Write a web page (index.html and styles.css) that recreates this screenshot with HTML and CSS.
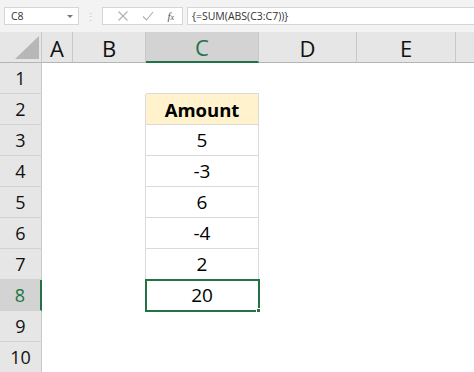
FILE: index.html
```html
<!DOCTYPE html>
<html>
<head>
<meta charset="utf-8">
<link rel="stylesheet" href="styles.css">
</head>
<body>
<div class="app">
  <div class="toolbar">
    <div class="namebox"><span class="name">C8</span><span class="caret"></span></div>
    <div class="grip">⋮</div>
    <div class="fbuttons">
      <svg class="ico" width="12" height="12" viewBox="0 0 12 12"><path d="M1.5 1.5 L10.5 10.5 M10.5 1.5 L1.5 10.5" stroke="#b0b0b0" stroke-width="1.1" fill="none"/></svg>
      <svg class="ico" width="12" height="12" viewBox="0 0 12 12"><path d="M1 6.5 L4.5 10 L11 2" stroke="#b0b0b0" stroke-width="1.1" fill="none"/></svg>
      <span class="fx">f<span class="fxx">x</span></span>
    </div>
    <div class="formula">{=SUM(ABS(C3:C7))}</div>
  </div>
  <div class="sheet">
    <div class="corner"><span class="tri"></span></div>
    <div class="colh">A</div>
    <div class="colh">B</div>
    <div class="colh sel">C</div>
    <div class="colh">D</div>
    <div class="colh">E</div>
    <div class="colh last"></div>

    <div class="rowh">1</div><div></div><div></div><div class="c c-top"></div><div></div><div></div><div></div>
    <div class="rowh">2</div><div></div><div class="b-edge"></div><div class="c head">Amount</div><div></div><div></div><div></div>
    <div class="rowh">3</div><div></div><div class="b-edge"></div><div class="c">5</div><div></div><div></div><div></div>
    <div class="rowh">4</div><div></div><div class="b-edge"></div><div class="c">-3</div><div></div><div></div><div></div>
    <div class="rowh">5</div><div></div><div class="b-edge"></div><div class="c">6</div><div></div><div></div><div></div>
    <div class="rowh">6</div><div></div><div class="b-edge"></div><div class="c">-4</div><div></div><div></div><div></div>
    <div class="rowh">7</div><div></div><div class="b-edge"></div><div class="c">2</div><div></div><div></div><div></div>
    <div class="rowh sel">8</div><div></div><div class="b-edge"></div><div class="c active">20<span class="handle"></span></div><div></div><div></div><div></div>
    <div class="rowh">9</div><div></div><div></div><div></div><div></div><div></div><div></div>
    <div class="rowh">10</div><div></div><div></div><div></div><div></div><div></div><div></div>
  </div>
</div>
</body>
</html>
```

FILE: styles.css
```css
* { box-sizing: border-box; }
html, body { margin: 0; padding: 0; background: #fff; }
body { width: 474px; height: 372px; overflow: hidden; font-family: "Open Sans", sans-serif; }

.toolbar {
  height: 32px;
  background: #f3f3f3;
  display: flex;
  align-items: center;
  padding: 0 0 0 4px;
}
.namebox {
  width: 75px; height: 18px;
  background: #fff;
  border: 1px solid #d6d6d6;
  display: flex; align-items: center; justify-content: space-between;
  padding: 0 5px 0 6px;
}
.name { font-size: 10.5px; color: #333; }
.caret { width: 0; height: 0; border-left: 3px solid transparent; border-right: 3px solid transparent; border-top: 3px solid #777; }
.grip { width: 23px; text-align: center; color: #c4c4c4; font-size: 11px; }
.fbuttons {
  width: 81px; height: 18px;
  background: #fff;
  border: 1px solid #d6d6d6;
  display: flex; align-items: center; justify-content: space-between;
  padding: 0 8px 0 14px;
}
.ico { display: block; }
.fx { font-family: "Liberation Serif", serif; font-style: italic; font-size: 11px; color: #555; line-height: 1; }
.fxx { font-size: 8px; }
.formula {
  flex: 1; height: 18px; margin-left: 4px;
  background: #fff;
  border: 1px solid #d6d6d6; border-right: none;
  font-size: 10.5px; color: #333;
  padding-left: 4px; line-height: 16px;
}

.sheet {
  display: grid;
  grid-template-columns: 42px 31px 73px 113px 98px 99px 1fr;
  grid-template-rows: 31px repeat(10, 31px);
}
.corner {
  background: #e6e6e6;
  border-right: 1px solid #c8c8c8;
  border-bottom: 1px solid #b4b4b4;
  position: relative;
}
.tri {
  position: absolute; right: 2px; bottom: 3px;
  width: 0; height: 0;
  border-left: 24px solid transparent;
  border-bottom: 23px solid #b7b7b7;
}
.colh {
  background: #e6e6e6;
  border-right: 1px solid #c8c8c8;
  border-bottom: 1px solid #b4b4b4;
  display: flex; align-items: center; justify-content: center;
  font-size: 22px; color: #111;
  padding-top: 1px;
}
.colh.last { border-right: none; }
.colh.sel { background: #d3d3d3; color: #217346; border-bottom: 2px solid #217346; }
.rowh {
  background: #e6e6e6;
  border-right: 1px solid #c8c8c8;
  border-bottom: 1px solid #d2d2d2;
  display: flex; align-items: center; justify-content: center;
  font-size: 18px; color: #111;
}
.rowh.sel { background: #d3d3d3; color: #217346; border-right: 2px solid #217346; }

.c {
  display: flex; align-items: center; justify-content: center;
  font-family: "Open Sans", sans-serif;
  font-size: 19px; color: #000;
  border-right: 1px solid #dadada;
  border-bottom: 1px solid #dadada;
  position: relative;
}
.c.c-top { border-right: none; }
.b-edge { border-right: 1px solid #dadada; }
.c.head { background: #fff2cc; font-weight: 700; font-size: 18.5px; }
.c.active {
  outline: 2px solid #217346;
  outline-offset: -1px;
}
.handle {
  position: absolute; right: -3px; bottom: -3px;
  width: 5px; height: 5px;
  background: #217346;
  border: 1px solid #fff;
}
```
